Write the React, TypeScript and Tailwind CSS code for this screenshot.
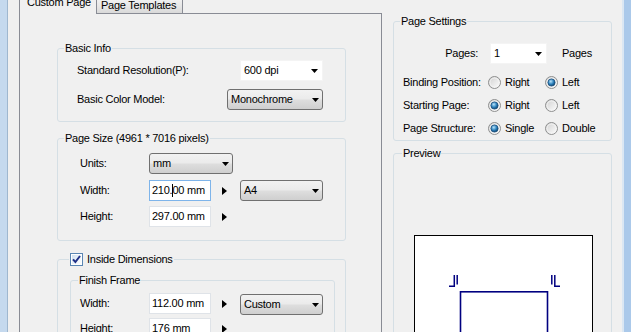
import React from "react";

function DownArrow() {
  return (
    <svg width="7" height="4" viewBox="0 0 7 4" className="shrink-0">
      <polygon points="0,0 7,0 3.5,4" fill="#000" />
    </svg>
  );
}

function RightArrow() {
  return (
    <svg width="5" height="8" viewBox="0 0 5 8" className="shrink-0">
      <polygon points="0,0 5,4 0,8" fill="#000" />
    </svg>
  );
}

function Radio({ checked }: { checked?: boolean }) {
  return (
    <svg width="13" height="13" viewBox="0 0 13 13" className="shrink-0">
      <defs>
        <linearGradient id="rbg" x1="0" y1="0" x2="1" y2="1">
          <stop offset="0" stopColor="#cfcfcf" />
          <stop offset="1" stopColor="#ffffff" />
        </linearGradient>
        <radialGradient id="rdot" cx="0.4" cy="0.35" r="0.7">
          <stop offset="0" stopColor="#b9e4fb" />
          <stop offset="0.55" stopColor="#2d82bd" />
          <stop offset="1" stopColor="#0b3b63" />
        </radialGradient>
      </defs>
      <circle cx="6.5" cy="6.5" r="6" fill="url(#rbg)" stroke="#8e8f8f" />
      <circle cx="6.5" cy="6.5" r="4.5" fill="none" stroke="#f4f4f4" strokeWidth="0.8" />
      {checked && <circle cx="6.5" cy="6.5" r="3.6" fill="url(#rdot)" stroke="#1a4f7d" strokeWidth="0.8" />}
    </svg>
  );
}

function Checkbox() {
  return (
    <svg width="13" height="13" viewBox="0 0 13 13" className="shrink-0">
      <defs>
        <linearGradient id="cbg" x1="0" y1="0" x2="1" y2="1">
          <stop offset="0" stopColor="#cfe0f0" />
          <stop offset="1" stopColor="#ffffff" />
        </linearGradient>
      </defs>
      <rect x="0.5" y="0.5" width="12" height="12" fill="#ffffff" stroke="#5a86b3" />
      <rect x="2" y="2" width="9" height="9" fill="url(#cbg)" />
      <path d="M3 6.3 L5.4 9 L10 3" stroke="#1f2f86" strokeWidth="2" fill="none" />
    </svg>
  );
}

function EditCombo({ text, className }: { text: string; className: string }) {
  return (
    <div className={`h-[21px] flex items-center justify-between pl-[3px] pr-[4px] bg-white border border-[#f4f4f4] ${className}`}>
      <span>{text}</span>
      <DownArrow />
    </div>
  );
}

function BtnCombo({ text, className }: { text: string; className: string }) {
  return (
    <div
      className={`h-[21px] flex items-center justify-between pl-[3px] pr-[3px] rounded-[3px] border border-[#707070] bg-[linear-gradient(to_bottom,#f2f2f2,#ebebeb_45%,#dddddd_55%,#cfcfcf)] ${className}`}
    >
      <span>{text}</span>
      <DownArrow />
    </div>
  );
}

function TextBox({ children, focused }: { children: React.ReactNode; focused?: boolean }) {
  return (
    <div
      className={`w-[62px] h-[21px] flex items-center pl-[2px] bg-white border overflow-hidden whitespace-nowrap ${
        focused ? "border-[#7eb4ea]" : "border-[#dfe3e8]"
      }`}
    >
      {children}
    </div>
  );
}

function Group({
  title,
  className,
  children,
  titleClass,
}: {
  title: React.ReactNode;
  className: string;
  children?: React.ReactNode;
  titleClass?: string;
}) {
  return (
    <div className={`relative border border-[#d5dfe5] rounded-[3px] shrink-0 ${className}`}>
      <div className={`absolute top-[-7px] px-[1px] bg-[#f0f0f0] leading-[13px] whitespace-nowrap ${titleClass ?? "left-[6px]"}`}>
        {title}
      </div>
      {children}
    </div>
  );
}

function SizeRow({
  label,
  box,
  arrow,
  right,
  className,
}: {
  label: string;
  box: React.ReactNode;
  arrow?: boolean;
  right?: React.ReactNode;
  className?: string;
}) {
  return (
    <div className={`flex items-center h-[21px] ${className ?? ""}`}>
      <div className="w-[69px] shrink-0">{label}</div>
      {box}
      {arrow && (
        <div className="ml-[11px]">
          <RightArrow />
        </div>
      )}
      {right && <div className="ml-[13px]">{right}</div>}
    </div>
  );
}

function RadioRow({
  label,
  a,
  b,
  first,
  className,
}: {
  label: string;
  a: string;
  b: string;
  first: boolean;
  className?: string;
}) {
  return (
    <div className={`flex items-center h-[21px] ${className ?? ""}`}>
      <div className="w-[85px] shrink-0 whitespace-nowrap">{label}</div>
      <div className="w-[57px] shrink-0 flex items-center gap-[4px]">
        <Radio checked={first} />
        <span>{a}</span>
      </div>
      <div className="flex items-center gap-[4px]">
        <Radio checked={!first} />
        <span>{b}</span>
      </div>
    </div>
  );
}

export default function App() {
  return (
    <div className="w-[631px] h-[332px] overflow-hidden bg-[#f0f0f0] flex text-black font-['Liberation_Sans',Arial,sans-serif] text-[11px] tracking-[-0.25px] leading-[13px]">
      {/* left window frame */}
      <div className="w-[8px] shrink-0 bg-[#c5d9ee] border-r border-[#9fb7cf]" />

      {/* tab control */}
      <div className="ml-[11px] w-[363px] shrink-0 flex flex-col">
        <div className="flex h-[13px] shrink-0">
          <div className="relative z-10 w-[78px] h-[14px] border-x border-[#898c95] bg-[#f0f0f0] pl-[7px]">
            <div className="-mt-[4px] whitespace-nowrap">Custom Page</div>
          </div>
          <div className="w-[86px] h-[13px] border-r border-[#898c95] bg-[linear-gradient(to_bottom,#f0f0f0,#e6e6e6_50%,#d9d9d9)] pl-[4px]">
            <div className="-mt-[1px] whitespace-nowrap">Page Templates</div>
          </div>
        </div>
        <div className="flex-1 border border-[#898c95] bg-[#f0f0f0] pl-[37px] pt-[34px] flex flex-col">
          {/* Basic Info */}
          <Group title="Basic Info" className="w-[289px] h-[74px]">
            <div className="flex flex-col pt-[11px] pl-[19px] pr-[22px]">
              <div className="flex items-center justify-between h-[21px]">
                <span>Standard Resolution(P):</span>
                <EditCombo text="600 dpi" className="w-[83px]" />
              </div>
              <div className="flex items-center justify-between h-[21px] mt-[8px]">
                <span>Basic Color Model:</span>
                <BtnCombo text="Monochrome" className="w-[96px]" />
              </div>
            </div>
          </Group>

          {/* Page Size */}
          <Group title="Page Size (4961 * 7016 pixels)" className="w-[289px] h-[103px] mt-[16px]">
            <div className="flex flex-col pt-[14px] pl-[22px]">
              <SizeRow label="Units:" box={<BtnCombo text="mm" className="w-[84px]" />} />
              <SizeRow
                className="mt-[6px]"
                label="Width:"
                box={
                  <TextBox focused>
                    <span>210.</span>
                    <span className="inline-block w-px h-[13px] bg-black -mr-px" />
                    <span>00 mm</span>
                  </TextBox>
                }
                arrow
                right={<BtnCombo text="A4" className="w-[83px]" />}
              />
              <SizeRow className="mt-[5px]" label="Height:" box={<TextBox>297.00 mm</TextBox>} arrow />
            </div>
          </Group>

          {/* Inside Dimensions */}
          <Group
            title={
              <div className="flex items-center gap-[4px]">
                <Checkbox />
                <span>Inside Dimensions</span>
              </div>
            }
            titleClass="left-[11px]"
            className="w-[289px] h-[120px] mt-[18px]"
          >
            <Group title="Finish Frame" titleClass="left-[7px]" className="ml-[12px] mt-[20px] w-[265px] h-[90px]">
              <div className="flex flex-col pt-[12px] pl-[9px]">
                <SizeRow
                  label="Width:"
                  box={<TextBox>112.00 mm</TextBox>}
                  arrow
                  right={<BtnCombo text="Custom" className="w-[83px] mt-[2px]" />}
                />
                <SizeRow className="mt-[4px]" label="Height:" box={<TextBox>176 mm</TextBox>} arrow />
              </div>
            </Group>
          </Group>
        </div>
      </div>

      {/* right column */}
      <div className="ml-[11px] w-[219px] shrink-0 flex flex-col pt-[21px]">
        <Group title="Page Settings" className="w-[219px] h-[120px]">
          <div className="flex flex-col pt-[21px] pl-[9px]">
            <div className="flex items-center h-[21px]">
              <div className="w-[85px] shrink-0 text-right pr-[10px]">Pages:</div>
              <EditCombo text="1" className="ml-[2px] w-[57px]" />
              <span className="ml-[15px]">Pages</span>
            </div>
            <RadioRow className="mt-[8px]" label="Binding Position:" a="Right" b="Left" first={false} />
            <RadioRow className="mt-[2px]" label="Starting Page:" a="Right" b="Left" first />
            <RadioRow className="mt-[2px]" label="Page Structure:" a="Single" b="Double" first />
          </div>
        </Group>
        <Group title="Preview" titleClass="left-[8px]" className="w-[219px] h-[200px] mt-[12px]">
          <div className="ml-[20px] mt-[81px] w-[179px] h-[120px] bg-white border border-black">
            <svg width="177" height="118" viewBox="0 0 177 118">
              <rect x="45.5" y="55.8" width="87" height="80" fill="none" stroke="#000080" strokeWidth="1.6" />
              <path d="M34 50.3 H39.3 V39" fill="none" stroke="#000080" strokeWidth="1.5" />
              <path d="M42.2 39 V48.5" fill="none" stroke="#000080" strokeWidth="1.5" />
              <path d="M136.8 39 V48.5" fill="none" stroke="#000080" strokeWidth="1.5" />
              <path d="M139.8 39 V50.3 H145" fill="none" stroke="#000080" strokeWidth="1.5" />
            </svg>
          </div>
        </Group>
      </div>

      {/* right window frame */}
      <div className="ml-[10px] w-[9px] shrink-0 bg-[#abc9ea] border-l-2 border-[#dbe7f3]" />
    </div>
  );
}
